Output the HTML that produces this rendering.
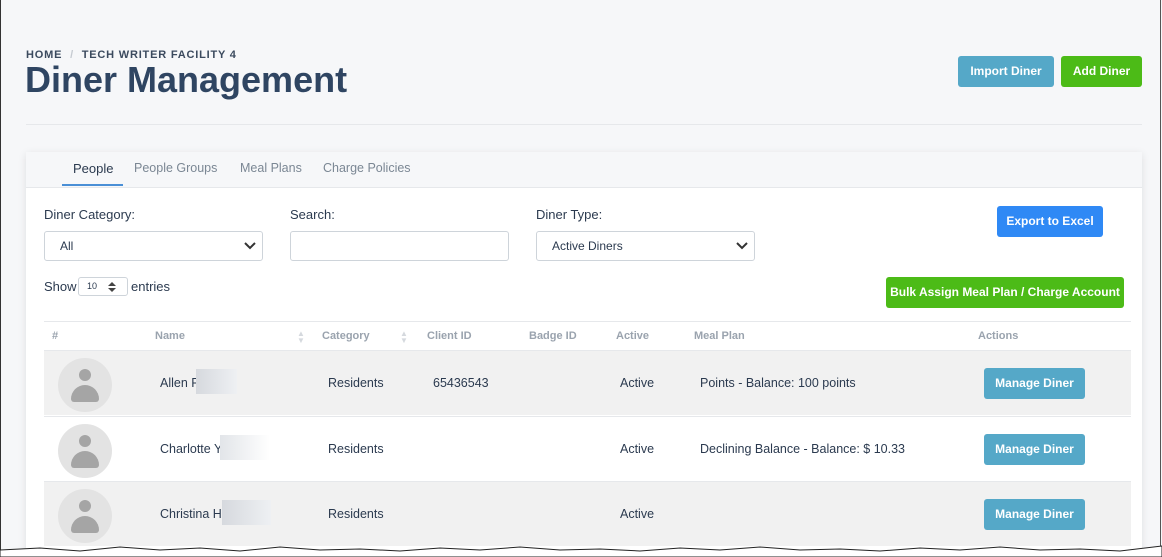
<!DOCTYPE html><html><head><style>
*{box-sizing:border-box;margin:0;padding:0}
body{width:1162px;height:557px;overflow:hidden;background:#f6f7f9;font-family:"Liberation Sans",sans-serif;color:#2b3a4f;position:relative}
.a{position:absolute;white-space:nowrap}
.btn{position:absolute;color:#fff;font-weight:bold;font-size:12px;border-radius:3px;text-align:center}
.row{position:absolute;left:44px;width:1087px;height:65px;border-top:1px solid #e6e8eb}
.av{position:absolute;left:14px;top:7px;width:54px;height:54px;border-radius:50%;background:#e3e3e3}
.av:before{content:"";position:absolute;left:21px;top:11px;width:12px;height:12px;border-radius:50%;background:#a5a5a5}
.av:after{content:"";position:absolute;left:13px;top:27px;width:28px;height:17px;border-radius:14px 14px 3px 3px;background:#a5a5a5}
.t{position:absolute;font-size:12.5px;color:#2b3a4f;top:25px}
.md{position:absolute;left:940px;top:17px;width:101px;height:31px;background:#55a8c8;border-radius:3px;color:#fff;font-weight:bold;font-size:12px;text-align:center;line-height:31px}
.blur{position:absolute;top:18px;height:25px;background:linear-gradient(90deg,#d6d9de,#eef0f3)}
.th{position:absolute;top:330px;font-size:11px;font-weight:bold;color:#9aa3ae}
.sel{position:absolute;height:30px;border:1px solid #ced4da;border-radius:3px;background:#fff;font-size:12px;padding:0 15px;line-height:28px}
.sel svg{position:absolute;right:6px;top:10px}
</style></head><body>
<div class="a" style="left:0;top:0;width:1px;height:557px;background:#333"></div>
<div class="a" style="right:1px;top:0;width:1px;height:557px;background:#555"></div>
<div class="a" style="left:26px;top:49px;font-size:11px;font-weight:bold;letter-spacing:.8px;color:#3b4a5e">HOME <span style="color:#c5cad1;margin:0 4px">/</span> TECH WRITER FACILITY 4</div>
<div class="a" style="left:25px;top:59px;font-size:36px;font-weight:bold;color:#2f4562">Diner Management</div>
<div class="btn" style="left:958px;top:56px;width:96px;height:31px;line-height:31px;background:#55a8c8">Import Diner</div>
<div class="btn" style="left:1061px;top:56px;width:81px;height:31px;line-height:31px;background:#4cbb17">Add Diner</div>
<div class="a" style="left:26px;top:124px;width:1116px;height:1px;background:#e6e8eb"></div>
<div class="a" style="left:26px;top:152px;width:1116px;height:405px;background:#fff;box-shadow:0 2px 8px rgba(0,0,0,.1)"></div>
<div class="a" style="left:26px;top:152px;width:1116px;height:36px;background:#f6f7f9;border-bottom:1px solid #e6e8eb"></div>
<div class="a" style="left:73px;top:161px;font-size:13px;color:#2b3a4f">People</div>
<div class="a" style="left:62px;top:184px;width:61px;height:2px;background:#4a8fd6"></div>
<div class="a" style="left:134px;top:161px;font-size:12.5px;color:#7b8794">People Groups</div>
<div class="a" style="left:240px;top:161px;font-size:12.5px;color:#7b8794">Meal Plans</div>
<div class="a" style="left:323px;top:161px;font-size:12.5px;color:#7b8794">Charge Policies</div>
<div class="a" style="left:44px;top:207px;font-size:13px">Diner Category:</div>
<div class="a" style="left:290px;top:207px;font-size:13px">Search:</div>
<div class="a" style="left:536px;top:207px;font-size:13px">Diner Type:</div>
<div class="sel" style="left:44px;top:231px;width:219px">All<svg width="12" height="8"><path d="M1 1l5 5 5-5" stroke="#333" stroke-width="2" fill="none"/></svg></div>
<div class="sel" style="left:290px;top:231px;width:219px"></div>
<div class="sel" style="left:536px;top:231px;width:219px">Active Diners<svg width="12" height="8"><path d="M1 1l5 5 5-5" stroke="#333" stroke-width="2" fill="none"/></svg></div>
<div class="btn" style="left:997px;top:206px;width:106px;height:31px;line-height:31px;background:#2f89f5">Export to Excel</div>
<div class="a" style="left:44px;top:279px;font-size:13px">Show</div>
<div class="a" style="left:78px;top:277px;width:50px;height:19px;border:1px solid #ced4da;border-radius:3px;font-size:9px;padding-left:8px;line-height:17px">10<svg style="position:absolute;left:29px;top:4px" width="8" height="10"><path d="M0 4l4-4 4 4zM0 6l4 4 4-4z" fill="#444"/></svg></div>
<div class="a" style="left:131px;top:279px;font-size:13px">entries</div>
<div class="btn" style="left:886px;top:277px;width:238px;height:31px;line-height:31px;background:#4cbb17">Bulk Assign Meal Plan / Charge Account</div>
<div class="a" style="left:44px;top:321px;width:1087px;height:1px;background:#e6e8eb"></div>
<div class="th" style="left:52px">#</div>
<div class="th" style="left:155px">Name</div>
<div class="th" style="left:322px">Category</div>
<div class="th" style="left:427px">Client ID</div>
<div class="th" style="left:529px">Badge ID</div>
<div class="th" style="left:616px">Active</div>
<div class="th" style="left:694px">Meal Plan</div>
<div class="th" style="left:978px">Actions</div>
<div class="a" style="left:297px;top:330px;font-size:8px;color:#d5d9de;line-height:7px">▲<br>▼</div>
<div class="a" style="left:400px;top:330px;font-size:8px;color:#d5d9de;line-height:7px">▲<br>▼</div>
<div class="row" style="top:350px;background:#f1f1f1"><div class="av"></div><div class="t" style="left:116px">Allen F</div><div class="blur" style="left:152px;width:41px"></div><div class="t" style="left:284px">Residents</div><div class="t" style="left:389px">65436543</div><div class="t" style="left:576px">Active</div><div class="t" style="left:656px">Points - Balance: 100 points</div><div class="md">Manage Diner</div></div>
<div class="row" style="top:416px;background:#fff"><div class="av"></div><div class="t" style="left:116px">Charlotte Y</div><div class="blur" style="left:176px;width:50px;background:linear-gradient(90deg,#e2e5e9,#fff)"></div><div class="t" style="left:284px">Residents</div><div class="t" style="left:576px">Active</div><div class="t" style="left:656px">Declining Balance - Balance: $ 10.33</div><div class="md">Manage Diner</div></div>
<div class="row" style="top:481px;background:#f1f1f1"><div class="av"></div><div class="t" style="left:116px">Christina H</div><div class="blur" style="left:178px;width:49px"></div><div class="t" style="left:284px">Residents</div><div class="t" style="left:576px">Active</div><div class="md">Manage Diner</div></div>
<svg class="a" style="left:0;top:540px" width="1162" height="17"><path d="M0 10 L40 8 L80 11 L120 7 L160 10 L200 8 L240 11 L280 7 L320 10 L360 9 L400 11 L440 8 L480 10 L520 7 L560 10 L600 9 L640 11 L680 8 L720 10 L760 7 L800 10 L840 9 L880 11 L920 8 L960 10 L1000 7 L1040 10 L1080 9 L1120 11 L1162 6 L1162 17 L0 17Z" fill="#fff" stroke="#222" stroke-width="1"/></svg>
</body></html>
